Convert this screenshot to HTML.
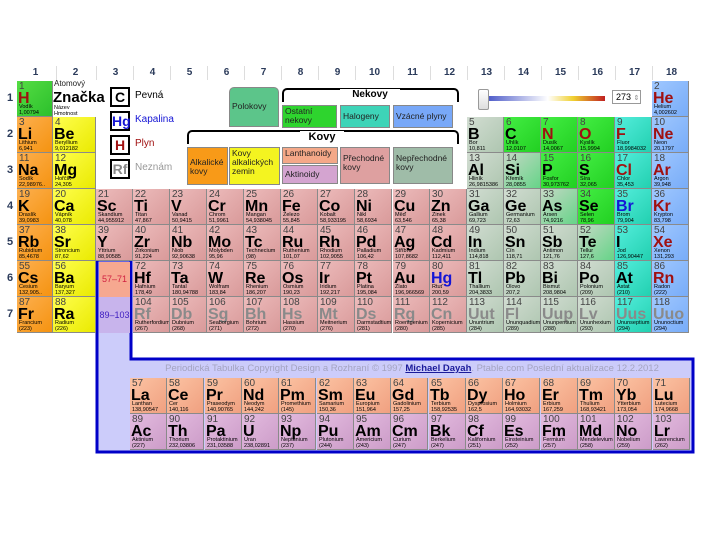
<!DOCTYPE html>
<html><head><meta charset="utf-8"><style>
body{margin:0;width:720px;height:540px;background:#fff;position:relative;overflow:hidden;font-family:"Liberation Sans",sans-serif}
.c{position:absolute;width:37px;height:36px;box-sizing:border-box;border-right:1px solid #8a8a8a;border-bottom:1px solid #8a8a8a;overflow:hidden;color:#000}
.c i{position:absolute;left:2px;top:0;font-style:normal;font-size:10px;line-height:11px;color:#444}
.c b{position:absolute;left:1px;top:9px;font-size:16px;line-height:17px;font-weight:bold}
.c u{position:absolute;left:2px;top:24px;text-decoration:none;font-size:5.5px;line-height:5.5px;white-space:nowrap}
.al{background:linear-gradient(135deg,#fdb050,#f59310)}
.ae{background:linear-gradient(135deg,#ffff50,#eaea00)}
.tr{background:linear-gradient(135deg,#edbcbc,#d99a9a)}
.pt{background:linear-gradient(135deg,#d2ddd2,#aec6b0)}
.md{background:linear-gradient(135deg,#c6d8c6,#66d488)}
.nm{background:linear-gradient(135deg,#44ee44,#22d022)}
.ha{background:linear-gradient(135deg,#55eedd,#22d0b0)}
.ng{background:linear-gradient(135deg,#a0c8ff,#78acf8)}
.la{background:linear-gradient(135deg,#fcc4a4,#f0a080)}
.ac{background:linear-gradient(135deg,#e4bce0,#cc9cc8)}
.g b{color:#a01010}.l b{color:#1515d5}.x b{color:#8a8a8a}
.h{position:absolute;top:66px;width:37px;text-align:center;font-size:10px;font-weight:bold;color:#2a3a5a;border-left:1px solid #ddd;height:14px;line-height:14px}
.r{position:absolute;left:4px;width:12px;font-size:11px;font-weight:bold;color:#2a3a5a;text-align:center}
.lg{position:absolute;box-sizing:border-box;border:1px solid #888;font-size:8.5px;line-height:9px;padding:1px 2px;color:#222}
.sb{position:absolute;left:110px;width:20px;height:20px;box-sizing:border-box;border:2px solid #000;font-size:14px;font-weight:bold;text-align:center;line-height:17px;background:#fff}
.st{position:absolute;left:135px;font-size:10px}
</style></head><body>
<div class="h" style="left:17px;border:0">1</div><div class="h" style="left:56px">2</div>
<div class="h" style="left:96px">3</div><div class="h" style="left:133px">4</div><div class="h" style="left:170px">5</div><div class="h" style="left:207px">6</div><div class="h" style="left:244px">7</div><div class="h" style="left:281px">8</div><div class="h" style="left:318px">9</div><div class="h" style="left:355px">10</div><div class="h" style="left:393px">11</div><div class="h" style="left:430px">12</div><div class="h" style="left:467px">13</div><div class="h" style="left:504px">14</div><div class="h" style="left:541px">15</div><div class="h" style="left:578px">16</div><div class="h" style="left:615px">17</div><div class="h" style="left:652px">18</div>
<div class="r" style="top:92px">1</div><div class="r" style="top:128px">2</div><div class="r" style="top:164px">3</div><div class="r" style="top:200px">4</div><div class="r" style="top:236px">5</div><div class="r" style="top:272px">6</div><div class="r" style="top:308px">7</div>

<svg style="position:absolute;left:0;top:0" width="720" height="540"><polygon points="97,260 131,260 131,359 693,359 693,452 97,452" fill="#ccccfa" stroke="#0000c8" stroke-width="3"/></svg>

<div style="position:absolute;left:54px;top:80px;font-size:8px;line-height:8px;color:#222">Atomový</div>
<div style="position:absolute;left:53px;top:89px;font-size:15px;font-weight:bold">Značka</div>
<div style="position:absolute;left:54px;top:106px;font-size:5.5px;line-height:5.5px">Název<br>Hmotnost</div>
<div class="sb" style="top:87px">C</div><div class="st" style="top:90px">Pevná</div>
<div class="sb" style="top:111px;color:#1515d5">Hg</div><div class="st" style="top:114px;color:#1515d5">Kapalina</div>
<div class="sb" style="top:135px;color:#a01010">H</div><div class="st" style="top:138px;color:#a01010">Plyn</div>
<div class="sb" style="top:159px;color:#8a8a8a">Rf</div><div class="st" style="top:162px;color:#999">Neznám</div>

<div class="lg" style="left:229px;top:87px;width:50px;height:40px;background:#5cc58a;border-radius:5px 5px 0 0;padding-top:14px">Polokovy</div>
<div style="position:absolute;left:282px;top:88px;width:173px;height:12px;border:2px solid #000;border-bottom:0;border-radius:5px 5px 0 0"></div>
<div style="position:absolute;left:340px;top:89px;width:60px;text-align:center;font-size:10px;font-weight:bold;background:#fff">Nekovy</div>
<div class="lg" style="left:282px;top:105px;width:55px;height:23px;background:#2ed42e">Ostatní<br>nekovy</div>
<div class="lg" style="left:340px;top:105px;width:50px;height:23px;background:#3ed4b8;padding-top:6px">Halogeny</div>
<div class="lg" style="left:393px;top:105px;width:60px;height:23px;background:#78a8f8;padding-top:6px">Vzácné plyny</div>
<div style="position:absolute;left:187px;top:130px;width:268px;height:12px;border:2px solid #000;border-bottom:0;border-radius:5px 5px 0 0"></div>
<div style="position:absolute;left:300px;top:131px;width:44px;text-align:center;font-size:11px;font-weight:bold;background:#fff">Kovy</div>
<div class="lg" style="left:187px;top:147px;width:41px;height:38px;background:#f89a18;padding-top:10px">Alkalické kovy</div>
<div class="lg" style="left:229px;top:147px;width:51px;height:38px;background:#f4f420">Kovy alkalických zemin</div>
<div class="lg" style="left:282px;top:147px;width:56px;height:17px;background:#f4a888">Lanthanoidy</div>
<div class="lg" style="left:282px;top:165px;width:56px;height:19px;background:#d4a4d0;padding-top:4px">Aktinoidy</div>
<div class="lg" style="left:340px;top:147px;width:50px;height:37px;background:#dea0a0;padding-top:6px">Přechodné kovy</div>
<div class="lg" style="left:393px;top:147px;width:60px;height:37px;background:#9fbca8;padding-top:6px">Nepřechodné kovy</div>

<div style="position:absolute;left:478px;top:96px;width:127px;height:5px;background:linear-gradient(90deg,#3040c0,#fff 55%,#f0d030 75%,#c02020)"></div>
<div style="position:absolute;left:478px;top:89px;width:9px;height:19px;border:1px solid #999;border-radius:2px;background:linear-gradient(#fff,#ddd)"></div>
<div style="position:absolute;left:612px;top:90px;width:29px;height:14px;border:1px solid #999;font-size:9px;line-height:13px;padding-left:3px;box-sizing:border-box;white-space:nowrap;overflow:hidden">273 <span style="font-size:7px;color:#888">⇕</span></div>

<div class="c g" style="left:17px;top:81px;width:36px;background:linear-gradient(135deg,#55dd44,#2cc02c)"><i>1</i><b>H</b><u>Vodík<br>1,00794</u></div>
<div class="c g ng" style="left:652px;top:81px"><i>2</i><b>He</b><u>Helium<br>4,002602</u></div>
<div class="c al" style="left:17px;top:117px;width:36px"><i>3</i><b>Li</b><u>Lithium<br>6,941</u></div>
<div class="c ae" style="left:53px;top:117px;width:43px"><i>4</i><b>Be</b><u>Beryllium<br>9,012182</u></div>
<div class="c pt" style="left:467px;top:117px"><i>5</i><b>B</b><u>Bor<br>10,811</u></div>
<div class="c nm" style="left:504px;top:117px"><i>6</i><b>C</b><u>Uhlík<br>12,0107</u></div>
<div class="c nm g" style="left:541px;top:117px"><i>7</i><b>N</b><u>Dusík<br>14,0067</u></div>
<div class="c nm g" style="left:578px;top:117px"><i>8</i><b>O</b><u>Kyslík<br>15,9994</u></div>
<div class="c ha g" style="left:615px;top:117px"><i>9</i><b>F</b><u>Fluor<br>18,9984032</u></div>
<div class="c ng g" style="left:652px;top:117px"><i>10</i><b>Ne</b><u>Neon<br>20,1797</u></div>
<div class="c al" style="left:17px;top:153px;width:36px"><i>11</i><b>Na</b><u>Sodík<br>22,98976..</u></div>
<div class="c ae" style="left:53px;top:153px;width:43px"><i>12</i><b>Mg</b><u>Hořčík<br>24,305</u></div>
<div class="c pt" style="left:467px;top:153px"><i>13</i><b>Al</b><u>Hliník<br>26,9815386</u></div>
<div class="c md" style="left:504px;top:153px"><i>14</i><b>Si</b><u>Křemík<br>28,0855</u></div>
<div class="c nm" style="left:541px;top:153px"><i>15</i><b>P</b><u>Fosfor<br>30,973762</u></div>
<div class="c nm" style="left:578px;top:153px"><i>16</i><b>S</b><u>Síra<br>32,065</u></div>
<div class="c ha g" style="left:615px;top:153px"><i>17</i><b>Cl</b><u>Chlor<br>35,453</u></div>
<div class="c ng g" style="left:652px;top:153px"><i>18</i><b>Ar</b><u>Argon<br>39,948</u></div>
<div class="c al" style="left:17px;top:189px;width:36px"><i>19</i><b>K</b><u>Draslík<br>39,0983</u></div>
<div class="c ae" style="left:53px;top:189px;width:43px"><i>20</i><b>Ca</b><u>Vápník<br>40,078</u></div>
<div class="c tr" style="left:96px;top:189px"><i>21</i><b>Sc</b><u>Skandium<br>44,955912</u></div>
<div class="c tr" style="left:133px;top:189px"><i>22</i><b>Ti</b><u>Titan<br>47,867</u></div>
<div class="c tr" style="left:170px;top:189px"><i>23</i><b>V</b><u>Vanad<br>50,9415</u></div>
<div class="c tr" style="left:207px;top:189px"><i>24</i><b>Cr</b><u>Chrom<br>51,9961</u></div>
<div class="c tr" style="left:244px;top:189px"><i>25</i><b>Mn</b><u>Mangan<br>54,938045</u></div>
<div class="c tr" style="left:281px;top:189px"><i>26</i><b>Fe</b><u>Železo<br>55,845</u></div>
<div class="c tr" style="left:318px;top:189px"><i>27</i><b>Co</b><u>Kobalt<br>58,933195</u></div>
<div class="c tr" style="left:355px;top:189px"><i>28</i><b>Ni</b><u>Nikl<br>58,6934</u></div>
<div class="c tr" style="left:393px;top:189px"><i>29</i><b>Cu</b><u>Měď<br>63,546</u></div>
<div class="c tr" style="left:430px;top:189px"><i>30</i><b>Zn</b><u>Zinek<br>65,38</u></div>
<div class="c pt" style="left:467px;top:189px"><i>31</i><b>Ga</b><u>Gallium<br>69,723</u></div>
<div class="c pt" style="left:504px;top:189px"><i>32</i><b>Ge</b><u>Germanium<br>72,63</u></div>
<div class="c md" style="left:541px;top:189px"><i>33</i><b>As</b><u>Arsen<br>74,9216</u></div>
<div class="c nm" style="left:578px;top:189px"><i>34</i><b>Se</b><u>Selen<br>78,96</u></div>
<div class="c ha l" style="left:615px;top:189px"><i>35</i><b>Br</b><u>Brom<br>79,904</u></div>
<div class="c ng g" style="left:652px;top:189px"><i>36</i><b>Kr</b><u>Krypton<br>83,798</u></div>
<div class="c al" style="left:17px;top:225px;width:36px"><i>37</i><b>Rb</b><u>Rubidium<br>85,4678</u></div>
<div class="c ae" style="left:53px;top:225px;width:43px"><i>38</i><b>Sr</b><u>Stroncium<br>87,62</u></div>
<div class="c tr" style="left:96px;top:225px"><i>39</i><b>Y</b><u>Yttrium<br>88,90585</u></div>
<div class="c tr" style="left:133px;top:225px"><i>40</i><b>Zr</b><u>Zirkonium<br>91,224</u></div>
<div class="c tr" style="left:170px;top:225px"><i>41</i><b>Nb</b><u>Niob<br>92,90638</u></div>
<div class="c tr" style="left:207px;top:225px"><i>42</i><b>Mo</b><u>Molybden<br>95,96</u></div>
<div class="c tr" style="left:244px;top:225px"><i>43</i><b>Tc</b><u>Technecium<br>(98)</u></div>
<div class="c tr" style="left:281px;top:225px"><i>44</i><b>Ru</b><u>Ruthenium<br>101,07</u></div>
<div class="c tr" style="left:318px;top:225px"><i>45</i><b>Rh</b><u>Rhodium<br>102,9055</u></div>
<div class="c tr" style="left:355px;top:225px"><i>46</i><b>Pd</b><u>Palladium<br>106,42</u></div>
<div class="c tr" style="left:393px;top:225px"><i>47</i><b>Ag</b><u>Stříbro<br>107,8682</u></div>
<div class="c tr" style="left:430px;top:225px"><i>48</i><b>Cd</b><u>Kadmium<br>112,411</u></div>
<div class="c pt" style="left:467px;top:225px"><i>49</i><b>In</b><u>Indium<br>114,818</u></div>
<div class="c pt" style="left:504px;top:225px"><i>50</i><b>Sn</b><u>Cín<br>118,71</u></div>
<div class="c pt" style="left:541px;top:225px"><i>51</i><b>Sb</b><u>Antimon<br>121,76</u></div>
<div class="c md" style="left:578px;top:225px"><i>52</i><b>Te</b><u>Tellur<br>127,6</u></div>
<div class="c ha" style="left:615px;top:225px"><i>53</i><b>I</b><u>Jod<br>126,90447</u></div>
<div class="c ng g" style="left:652px;top:225px"><i>54</i><b>Xe</b><u>Xenon<br>131,293</u></div>
<div class="c al" style="left:17px;top:261px;width:36px"><i>55</i><b>Cs</b><u>Cesium<br>132,905..</u></div>
<div class="c ae" style="left:53px;top:261px;width:43px"><i>56</i><b>Ba</b><u>Baryum<br>137,327</u></div>
<div class="c" style="left:99px;top:262px;width:31px;height:35px;border:0;background:#f6a890;color:#d02040;font-size:9px;text-align:center;line-height:35px">57–71</div>
<div class="c tr" style="left:133px;top:261px"><i>72</i><b>Hf</b><u>Hafnium<br>178,49</u></div>
<div class="c tr" style="left:170px;top:261px"><i>73</i><b>Ta</b><u>Tantal<br>180,94788</u></div>
<div class="c tr" style="left:207px;top:261px"><i>74</i><b>W</b><u>Wolfram<br>183,84</u></div>
<div class="c tr" style="left:244px;top:261px"><i>75</i><b>Re</b><u>Rhenium<br>186,207</u></div>
<div class="c tr" style="left:281px;top:261px"><i>76</i><b>Os</b><u>Osmium<br>190,23</u></div>
<div class="c tr" style="left:318px;top:261px"><i>77</i><b>Ir</b><u>Iridium<br>192,217</u></div>
<div class="c tr" style="left:355px;top:261px"><i>78</i><b>Pt</b><u>Platina<br>195,084</u></div>
<div class="c tr" style="left:393px;top:261px"><i>79</i><b>Au</b><u>Zlato<br>196,966569</u></div>
<div class="c tr l" style="left:430px;top:261px"><i>80</i><b>Hg</b><u>Rtuť<br>200,59</u></div>
<div class="c pt" style="left:467px;top:261px"><i>81</i><b>Tl</b><u>Thallium<br>204,3833</u></div>
<div class="c pt" style="left:504px;top:261px"><i>82</i><b>Pb</b><u>Olovo<br>207,2</u></div>
<div class="c pt" style="left:541px;top:261px"><i>83</i><b>Bi</b><u>Bismut<br>208,9804</u></div>
<div class="c pt" style="left:578px;top:261px"><i>84</i><b>Po</b><u>Polonium<br>(209)</u></div>
<div class="c ha" style="left:615px;top:261px"><i>85</i><b>At</b><u>Astat<br>(210)</u></div>
<div class="c ng g" style="left:652px;top:261px"><i>86</i><b>Rn</b><u>Radon<br>(222)</u></div>
<div class="c al" style="left:17px;top:297px;width:36px"><i>87</i><b>Fr</b><u>Francium<br>(223)</u></div>
<div class="c ae" style="left:53px;top:297px;width:43px"><i>88</i><b>Ra</b><u>Radium<br>(226)</u></div>
<div class="c" style="left:99px;top:297px;width:31px;height:36px;border:0;background:#c8b4ec;color:#4020c0;font-size:9px;text-align:center;line-height:36px">89–103</div>
<div class="c tr x" style="left:133px;top:297px"><i>104</i><b>Rf</b><u>Rutherfordium<br>(267)</u></div>
<div class="c tr x" style="left:170px;top:297px"><i>105</i><b>Db</b><u>Dubnium<br>(268)</u></div>
<div class="c tr x" style="left:207px;top:297px"><i>106</i><b>Sg</b><u>Seaborgium<br>(271)</u></div>
<div class="c tr x" style="left:244px;top:297px"><i>107</i><b>Bh</b><u>Bohrium<br>(272)</u></div>
<div class="c tr x" style="left:281px;top:297px"><i>108</i><b>Hs</b><u>Hassium<br>(270)</u></div>
<div class="c tr x" style="left:318px;top:297px"><i>109</i><b>Mt</b><u>Meitnerium<br>(276)</u></div>
<div class="c tr x" style="left:355px;top:297px"><i>110</i><b>Ds</b><u>Darmstadtium<br>(281)</u></div>
<div class="c tr x" style="left:393px;top:297px"><i>111</i><b>Rg</b><u>Roentgenium<br>(280)</u></div>
<div class="c tr x" style="left:430px;top:297px"><i>112</i><b>Cn</b><u>Kopernicium<br>(285)</u></div>
<div class="c pt x" style="left:467px;top:297px"><i>113</i><b>Uut</b><u>Ununtrium<br>(284)</u></div>
<div class="c pt x" style="left:504px;top:297px"><i>114</i><b>Fl</b><u>Ununquadium<br>(289)</u></div>
<div class="c pt x" style="left:541px;top:297px"><i>115</i><b>Uup</b><u>Ununpentium<br>(288)</u></div>
<div class="c pt x" style="left:578px;top:297px"><i>116</i><b>Lv</b><u>Ununhexium<br>(293)</u></div>
<div class="c ha x" style="left:615px;top:297px"><i>117</i><b>Uus</b><u>Ununseptium<br>(294)</u></div>
<div class="c ng x" style="left:652px;top:297px"><i>118</i><b>Uuo</b><u>Ununoctium<br>(294)</u></div>

<div style="position:absolute;left:133px;top:363px;width:558px;text-align:center;font-size:9.5px;color:#a4a4c0;white-space:nowrap">Periodická Tabulka Copyright Design a Rozhraní © 1997 <span style="color:#1a1a9a;font-weight:bold;text-decoration:underline">Michael Dayah</span>. Ptable.com Poslední aktualizace 12.2.2012</div>

<div class="c la" style="left:130px;top:378px"><i>57</i><b>La</b><u>Lanthan<br>138,90547</u></div>
<div class="c la" style="left:167px;top:378px"><i>58</i><b>Ce</b><u>Cer<br>140,116</u></div>
<div class="c la" style="left:205px;top:378px"><i>59</i><b>Pr</b><u>Praseodym<br>140,90765</u></div>
<div class="c la" style="left:242px;top:378px"><i>60</i><b>Nd</b><u>Neodym<br>144,242</u></div>
<div class="c la" style="left:279px;top:378px"><i>61</i><b>Pm</b><u>Promethium<br>(145)</u></div>
<div class="c la" style="left:317px;top:378px"><i>62</i><b>Sm</b><u>Samarium<br>150,36</u></div>
<div class="c la" style="left:354px;top:378px"><i>63</i><b>Eu</b><u>Europium<br>151,964</u></div>
<div class="c la" style="left:391px;top:378px"><i>64</i><b>Gd</b><u>Gadolinium<br>157,25</u></div>
<div class="c la" style="left:429px;top:378px"><i>65</i><b>Tb</b><u>Terbium<br>158,92535</u></div>
<div class="c la" style="left:466px;top:378px"><i>66</i><b>Dy</b><u>Dysprosium<br>162,5</u></div>
<div class="c la" style="left:503px;top:378px"><i>67</i><b>Ho</b><u>Holmium<br>164,93032</u></div>
<div class="c la" style="left:541px;top:378px"><i>68</i><b>Er</b><u>Erbium<br>167,259</u></div>
<div class="c la" style="left:578px;top:378px"><i>69</i><b>Tm</b><u>Thulium<br>168,93421</u></div>
<div class="c la" style="left:615px;top:378px"><i>70</i><b>Yb</b><u>Ytterbium<br>173,054</u></div>
<div class="c la" style="left:653px;top:378px"><i>71</i><b>Lu</b><u>Lutecium<br>174,9668</u></div>
<div class="c ac" style="left:130px;top:414px"><i>89</i><b>Ac</b><u>Aktinium<br>(227)</u></div>
<div class="c ac" style="left:167px;top:414px"><i>90</i><b>Th</b><u>Thorium<br>232,03806</u></div>
<div class="c ac" style="left:205px;top:414px"><i>91</i><b>Pa</b><u>Protaktinium<br>231,03588</u></div>
<div class="c ac" style="left:242px;top:414px"><i>92</i><b>U</b><u>Uran<br>238,02891</u></div>
<div class="c ac" style="left:279px;top:414px"><i>93</i><b>Np</b><u>Neptunium<br>(237)</u></div>
<div class="c ac" style="left:317px;top:414px"><i>94</i><b>Pu</b><u>Plutonium<br>(244)</u></div>
<div class="c ac" style="left:354px;top:414px"><i>95</i><b>Am</b><u>Americium<br>(243)</u></div>
<div class="c ac" style="left:391px;top:414px"><i>96</i><b>Cm</b><u>Curium<br>(247)</u></div>
<div class="c ac" style="left:429px;top:414px"><i>97</i><b>Bk</b><u>Berkelium<br>(247)</u></div>
<div class="c ac" style="left:466px;top:414px"><i>98</i><b>Cf</b><u>Kalifornium<br>(251)</u></div>
<div class="c ac" style="left:503px;top:414px"><i>99</i><b>Es</b><u>Einsteinium<br>(252)</u></div>
<div class="c ac" style="left:541px;top:414px"><i>100</i><b>Fm</b><u>Fermium<br>(257)</u></div>
<div class="c ac" style="left:578px;top:414px"><i>101</i><b>Md</b><u>Mendelevium<br>(258)</u></div>
<div class="c ac" style="left:615px;top:414px"><i>102</i><b>No</b><u>Nobelium<br>(259)</u></div>
<div class="c ac" style="left:653px;top:414px"><i>103</i><b>Lr</b><u>Lawrencium<br>(262)</u></div>
</body></html>
